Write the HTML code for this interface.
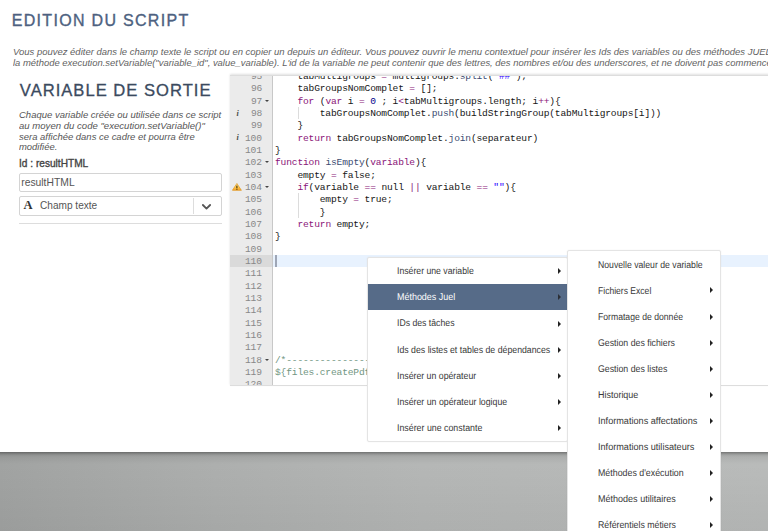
<!DOCTYPE html>
<html lang="fr">
<head>
<meta charset="utf-8">
<title>Edition du script</title>
<style>
*{box-sizing:border-box;margin:0;padding:0}
html,body{width:768px;height:531px;overflow:hidden}
body{font-family:"Liberation Sans",sans-serif;background:linear-gradient(to right,#a1a3a2 0%,#adafae 28%,#b5b7b6 55%,#b9bbba 100%);position:relative;color:#333}
#modal{position:absolute;left:-10px;top:-10px;width:800px;height:461.7px;background:#fff;box-shadow:0 1px 3px rgba(0,0,0,.35)}
#shade{position:absolute;left:0;top:451.7px;width:768px;height:80px;background:linear-gradient(to bottom,rgba(0,0,0,.15) 0,rgba(0,0,0,.06) 5px,rgba(0,0,0,0) 12px,rgba(0,0,0,.045) 80px)}
.fit{display:inline-block;transform-origin:0 50%;white-space:nowrap}
h1{position:absolute;left:11.8px;top:10.7px;font-size:16px;font-weight:normal;color:#4d6180;letter-spacing:1.3px;white-space:nowrap;line-height:20px;-webkit-text-stroke:.35px #4d6180}
.desc{position:absolute;left:12.5px;top:46.2px;font-size:9.75px;line-height:11.1px;font-style:italic;color:#626262;white-space:nowrap}
h2{position:absolute;left:19.8px;top:81px;font-size:16.6px;font-weight:normal;color:#3b4a5e;letter-spacing:1.0px;white-space:nowrap;line-height:20px;-webkit-text-stroke:.3px #3b4a5e}
.vdesc{position:absolute;left:19.2px;top:110.2px;font-size:9.7px;line-height:10.7px;font-style:italic;color:#555;white-space:nowrap}
.idl{position:absolute;left:18.6px;top:157.8px;font-size:10.4px;line-height:12px;font-weight:normal;color:#444;white-space:nowrap;-webkit-text-stroke:.35px #444}
.inp{position:absolute;left:19px;top:173px;width:203px;height:19px;border:1px solid #d4d4d4;border-radius:2px;background:#fff;font-size:10.35px;line-height:17px;padding-left:1.2px;color:#555}
.sel{position:absolute;left:19px;top:196px;width:203px;height:20px;border:1px solid #d4d4d4;border-radius:2px;background:#fff;font-size:10.1px;line-height:17.5px;color:#555}
.sel .a{position:absolute;left:3.6px;top:0;font-family:"Liberation Serif",serif;font-weight:bold;font-size:12.5px;color:#333}
.sel .t{position:absolute;left:20px;top:0}
.sel .sep{position:absolute;left:172.5px;top:1px;width:1px;height:16px;background:#ddd}
.sel svg{position:absolute;left:182px;top:7.2px}
.hr{position:absolute;left:19px;top:223px;width:203px;height:1px;background:#ddd}
#ed{position:absolute;left:230px;top:75px;width:560px;height:311px;border:1px solid #ddd;border-left:0;background:#fff;overflow:hidden;font-family:"Liberation Mono",monospace;font-size:9.6px;letter-spacing:-.16px;box-shadow:0 -1px 2px rgba(0,0,0,.12)}
#gut{position:absolute;left:0;top:0;width:43px;height:100%;background:#ebebeb;border-right:1px solid #c8c8c8}
.ln{position:absolute;left:0;width:42px;height:12.34px;line-height:12.34px;color:#888;white-space:pre}
.ln .n{position:absolute;right:10px;top:1.0px;transform:rotate(.02deg)}
.ln.act{background:#dadada}
.ln .f{position:absolute;left:35px;top:5.2px;width:0;height:0;border-left:2.1px solid transparent;border-right:2.1px solid transparent;border-top:2.4px solid #444}
.ln .i{position:absolute;left:6.4px;top:.9px;font-family:"Liberation Serif",serif;font-style:italic;font-weight:bold;font-size:8.2px;color:#4a4a4a}
.ln svg{position:absolute;left:2.3px;top:2px}
.cl{position:absolute;left:45.4px;margin-top:1.0px;transform-origin:0 50%;transform:rotate(.015deg);height:12.34px;line-height:12.34px;white-space:pre;color:#161616}
.al{position:absolute;left:43px;width:600px;height:12.34px;background:#e8f2fe}
.cur{position:absolute;left:45px;width:1.7px;height:11.8px;background:#9ea6b6}
.ig{position:absolute;width:1px;background:#dcdcdc}
.k{color:#8a1478}.fn{color:#3c4c72}.s{color:#2a00ff}.c{color:#719682}.nu{color:#00008b}
.menu{position:absolute;background:#fff;border:1px solid #e4e4e4;border-radius:2px;box-shadow:0 0 2px rgba(0,0,0,.06);font-size:9.8px;color:#383838}
.mi{position:relative;height:26.1px;line-height:26.1px;white-space:nowrap}
.mi .t{position:absolute;left:29.5px;top:0px;transform-origin:0 50%;display:block}
.mi .ar{position:absolute;top:10.4px;width:0;height:0;border-top:3px solid transparent;border-bottom:3px solid transparent;border-left:3.6px solid #222}
.mi.hl{background:#566b88;color:#fff}
.mi.hl .ar{border-left-color:#2b2f36}
#m1{left:367px;top:257px;width:201px;height:185px}
#m1 .ar{left:189.5px}
#m1 .t{left:28.5px;top:.3px}
#m2{left:567px;top:250px;width:154px;height:300px}
#m2 .t{left:29.8px;top:.5px}
#m2 .ar{left:142px}
</style>
</head>
<body>
<div id="shade"></div>
<div id="modal"></div>
<h1>EDITION DU SCRIPT</h1>
<div class="desc"><span class="fit" style="transform:scaleX(0.9724)">Vous pouvez éditer dans le champ texte le script ou en copier un depuis un éditeur. Vous pouvez ouvrir le menu contextuel pour insérer les Ids des variables ou des méthodes JUEL. Pour créer une variable de sortie, utilisez</span><br><span class="fit" style="transform:scaleX(0.9678)">la méthode execution.setVariable("variable_id", value_variable). L'id de la variable ne peut contenir que des lettres, des nombres et/ou des underscores, et ne doivent pas commencer par un nombre.</span></div>
<h2>VARIABLE DE SORTIE</h2>
<div class="vdesc"><span class="fit" style="transform:scaleX(0.9804)">Chaque variable créée ou utilisée dans ce script</span><br><span class="fit" style="transform:scaleX(0.9883)">au moyen du code "execution.setVariable()"</span><br><span class="fit" style="transform:scaleX(0.9773)">sera affichée dans ce cadre et pourra être</span><br><span class="fit" style="transform:scaleX(0.9742)">modifiée.</span></div>
<div class="idl"><span class="fit" style="transform:scaleX(0.9742)">Id : resultHTML</span></div>
<div class="inp">resultHTML</div>
<div class="sel"><span class="a">A</span><span class="t">Champ texte</span><span class="sep"></span><svg width="9" height="6" viewBox="0 0 9 6"><path d="M.9 1 L4.5 4.6 L8.1 1" fill="none" stroke="#555" stroke-width="1.8" stroke-linecap="round" stroke-linejoin="round"/></svg></div>
<div class="hr"></div>
<div id="ed">
<div class="cl" style="top:-6.11px">    tabMultigroups <span class="k">=</span> multigroups.<span class="fn">split</span>(<span class="s">"##"</span>);</div>
<div class="cl" style="top:6.23px">    tabGroupsNomComplet <span class="k">=</span> [];</div>
<div class="cl" style="top:18.57px">    <span class="k">for</span> (<span class="k">var</span> i <span class="k">=</span> <span class="nu">0</span> ; i<span class="k">&lt;</span>tabMultigroups.length; i<span class="k">++</span>){</div>
<div class="cl" style="top:30.91px">        tabGroupsNomComplet.<span class="fn">push</span>(buildStringGroup(tabMultigroups[i]))</div>
<div class="cl" style="top:43.25px">    }</div>
<div class="cl" style="top:55.59px">    <span class="k">return</span> tabGroupsNomComplet.<span class="fn">join</span>(separateur)</div>
<div class="cl" style="top:67.93px">}</div>
<div class="cl" style="top:80.27px"><span class="k">function</span> <span class="fn">isEmpty</span>(<span class="k">variable</span>){</div>
<div class="cl" style="top:92.61px">    empty <span class="k">=</span> false;</div>
<div class="cl" style="top:104.95px">    <span class="k">if</span>(variable <span class="k">==</span> null <span class="k">||</span> variable <span class="k">==</span> <span class="s">""</span>){</div>
<div class="cl" style="top:117.29px">        empty <span class="k">=</span> true;</div>
<div class="cl" style="top:129.63px">        }</div>
<div class="cl" style="top:141.97px">    <span class="k">return</span> empty;</div>
<div class="cl" style="top:154.31px">}</div>
<div class="al" style="top:178.99px"></div><div class="cur" style="top:179.39px"></div>
<div class="cl" style="top:277.71px"><span class="c">/*------------------------------------------------------------------</span></div>
<div class="cl" style="top:290.05px"><span class="c">${files.createPdfFromHtml(resultHTML)}</span></div>
<div class="ig" style="left:67.7px;top:30.91px;height:12.34px"></div>
<div class="ig" style="left:67.7px;top:117.29px;height:24.68px"></div>
<div id="gut">
<div class="ln" style="top:-6.11px"><span class="n">95</span></div>
<div class="ln" style="top:6.23px"><span class="n">96</span></div>
<div class="ln" style="top:18.57px"><i class="f"></i><span class="n">97</span></div>
<div class="ln" style="top:30.91px"><span class="i">i</span><span class="n">98</span></div>
<div class="ln" style="top:43.25px"><span class="n">99</span></div>
<div class="ln" style="top:55.59px"><span class="i">i</span><span class="n">100</span></div>
<div class="ln" style="top:67.93px"><span class="n">101</span></div>
<div class="ln" style="top:80.27px"><i class="f"></i><span class="n">102</span></div>
<div class="ln" style="top:92.61px"><span class="n">103</span></div>
<div class="ln" style="top:104.95px"><i class="f"></i><svg width="9.8" height="7.8" viewBox="0 0 9 8" preserveAspectRatio="none"><defs><linearGradient id="wg" x1="0" y1="0" x2="0" y2="1"><stop offset="0" stop-color="#fff0a8"/><stop offset=".55" stop-color="#fdc94f"/><stop offset="1" stop-color="#f7a325"/></linearGradient></defs><path d="M4.5 .5 L8.6 7.5 L.4 7.5 Z" fill="url(#wg)" stroke="#e0951c" stroke-width=".7" stroke-linejoin="round"/><rect x="4" y="2.7" width="1" height="2.6" fill="#3a2c08"/><rect x="4" y="5.9" width="1" height="1" fill="#3a2c08"/></svg><span class="n">104</span></div>
<div class="ln" style="top:117.29px"><span class="n">105</span></div>
<div class="ln" style="top:129.63px"><span class="n">106</span></div>
<div class="ln" style="top:141.97px"><span class="n">107</span></div>
<div class="ln" style="top:154.31px"><span class="n">108</span></div>
<div class="ln" style="top:166.65px"><span class="n">109</span></div>
<div class="ln act" style="top:178.99px"><span class="n">110</span></div>
<div class="ln" style="top:191.33px"><span class="n">111</span></div>
<div class="ln" style="top:203.67px"><span class="n">112</span></div>
<div class="ln" style="top:216.01px"><span class="n">113</span></div>
<div class="ln" style="top:228.35px"><span class="n">114</span></div>
<div class="ln" style="top:240.69px"><span class="n">115</span></div>
<div class="ln" style="top:253.03px"><span class="n">116</span></div>
<div class="ln" style="top:265.37px"><span class="n">117</span></div>
<div class="ln" style="top:277.71px"><i class="f"></i><span class="n">118</span></div>
<div class="ln" style="top:290.05px"><span class="n">119</span></div>
<div class="ln" style="top:302.39px"><span class="n">120</span></div>
</div>
</div>
<div class="menu" id="m1">
<div class="mi"><span class="t" style="transform:scaleX(0.887) rotate(.03deg)">Insérer une variable</span><i class="ar"></i></div>
<div class="mi hl"><span class="t" style="transform:scaleX(0.913) rotate(.03deg)">Méthodes Juel</span><i class="ar"></i></div>
<div class="mi"><span class="t" style="transform:scaleX(0.887) rotate(.03deg)">IDs des tâches</span><i class="ar"></i></div>
<div class="mi"><span class="t" style="transform:scaleX(0.893) rotate(.03deg)">Ids des listes et tables de dépendances</span><i class="ar"></i></div>
<div class="mi"><span class="t" style="transform:scaleX(0.892) rotate(.03deg)">Insérer un opérateur</span><i class="ar"></i></div>
<div class="mi"><span class="t" style="transform:scaleX(0.895) rotate(.03deg)">Insérer un opérateur logique</span><i class="ar"></i></div>
<div class="mi"><span class="t" style="transform:scaleX(0.900) rotate(.03deg)">Insérer une constante</span><i class="ar"></i></div>
</div>
<div class="menu" id="m2">
<div class="mi"><span class="t" style="transform:scaleX(0.886) rotate(.03deg)">Nouvelle valeur de variable</span></div>
<div class="mi"><span class="t" style="transform:scaleX(0.874) rotate(.03deg)">Fichiers Excel</span><i class="ar"></i></div>
<div class="mi"><span class="t" style="transform:scaleX(0.882) rotate(.03deg)">Formatage de donnée</span><i class="ar"></i></div>
<div class="mi"><span class="t" style="transform:scaleX(0.895) rotate(.03deg)">Gestion des fichiers</span><i class="ar"></i></div>
<div class="mi"><span class="t" style="transform:scaleX(0.896) rotate(.03deg)">Gestion des listes</span><i class="ar"></i></div>
<div class="mi"><span class="t" style="transform:scaleX(0.914) rotate(.03deg)">Historique</span><i class="ar"></i></div>
<div class="mi"><span class="t" style="transform:scaleX(0.932) rotate(.03deg)">Informations affectations</span><i class="ar"></i></div>
<div class="mi"><span class="t" style="transform:scaleX(0.931) rotate(.03deg)">Informations utilisateurs</span><i class="ar"></i></div>
<div class="mi"><span class="t" style="transform:scaleX(0.902) rotate(.03deg)">Méthodes d'exécution</span><i class="ar"></i></div>
<div class="mi"><span class="t" style="transform:scaleX(0.921) rotate(.03deg)">Méthodes utilitaires</span><i class="ar"></i></div>
<div class="mi"><span class="t" style="transform:scaleX(0.895) rotate(.03deg)">Référentiels métiers</span><i class="ar"></i></div>
<div class="mi"><span class="t" style="transform:scaleX(0.900) rotate(.03deg)">Utilitaires de date</span><i class="ar"></i></div>
</div>
</body>
</html>
